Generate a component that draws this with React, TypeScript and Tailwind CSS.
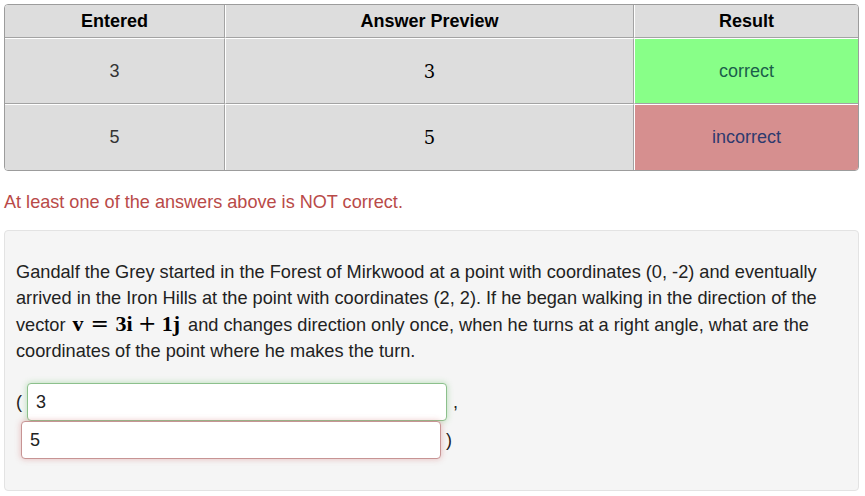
import React from "react";

const rows = [
  { entered: "3", preview: "3", ok: true },
  { entered: "5", preview: "5", ok: false },
];

export default function App() {
  return (
    <div className="min-h-screen bg-white pl-[4px] pt-[4px] font-['Liberation_Sans',Arial,sans-serif] text-[#333]">
      <div className="w-[855px]">
        <div className="overflow-hidden rounded-[4px] border border-[#9c9c9c]">
          <table className="w-full border-separate border-spacing-0 text-center text-[18px]">
            <colgroup>
              <col className="w-[220px]" />
              <col className="w-[409px]" />
              <col />
            </colgroup>
            <thead>
              <tr className="h-[33px] bg-[#dddddd]">
                <th className="border-b border-r border-[#a3a3a3] font-bold text-black">Entered</th>
                <th className="border-b border-l border-r border-b-[#a3a3a3] border-l-white border-r-[#a3a3a3] font-bold text-black">
                  Answer Preview
                </th>
                <th className="border-b border-l border-b-[#a3a3a3] border-l-white font-bold text-black">Result</th>
              </tr>
            </thead>
            <tbody>
              {rows.map((r, i) => (
                <tr key={i} className="h-[66px]">
                  <td
                    className={`border-r border-t border-r-[#a3a3a3] border-t-white bg-[#dddddd] ${i === 0 ? "border-b border-b-[#a3a3a3]" : ""}`}
                  >
                    {r.entered}
                  </td>
                  <td
                    className={`border-l border-r border-t border-l-white border-r-[#a3a3a3] border-t-white bg-[#dddddd] font-['DejaVu_Serif',serif] text-[18px] text-black ${i === 0 ? "border-b border-b-[#a3a3a3]" : ""}`}
                  >
                    {r.preview}
                  </td>
                  <td
                    className={`border-l border-t border-l-white border-t-white ${
                      r.ok ? "bg-[#88ff88] text-[#1b5e4a]" : "bg-[#d68f8f] text-[#2e3a6e]"
                    } ${i === 0 ? "border-b border-b-[#a3a3a3]" : ""}`}
                  >
                    {r.ok ? "correct" : "incorrect"}
                  </td>
                </tr>
              ))}
            </tbody>
          </table>
        </div>

        <p className="mt-[20px] text-[18.1px] leading-[22px] text-[#b94a48]">
          At least one of the answers above is NOT correct.
        </p>

        <div className="mt-[17px] rounded-[4px] border border-[#e3e3e3] bg-[#f5f5f5] px-[11px] pb-[31px] pt-[28px]">
          <p className="text-[18.2px] leading-[26px] text-[#222]">
            Gandalf the Grey started in the Forest of Mirkwood at a point with coordinates (0, -2) and eventually
            arrived in the Iron Hills at the point with coordinates (2, 2). If he began walking in the direction of the
            vector{" "}
            <span className="ml-[2px] mr-[3px] whitespace-nowrap font-['Liberation_Serif',serif] text-[22px] leading-[26px] text-black">
              <b>v</b>
              <span className="inline-block w-[32px] text-center font-['DejaVu_Serif',serif] text-[22px] font-light">=</span>
              <b>3i</b>
              <span className="inline-block w-[29px] text-center font-['DejaVu_Serif',serif] text-[22px] font-light">+</span>
              <b>1j</b>
            </span>{" "}
            and changes direction only once, when he turns at a right angle, what are the coordinates of the point
            where he makes the turn.
          </p>

          <div className="mt-[19px] flex flex-wrap items-center text-[18px] text-[#222]">
            <span>(</span>
            <div className="ml-[5px] flex h-[38px] w-[420px] items-center rounded-[4px] border border-[#8cc08c] bg-white pl-[8px] shadow-[0_0_6px_rgba(100,190,100,0.45)]">
              3
            </div>
            <span className="ml-[6px] mr-[6px]">,</span>
            <div className="ml-[5px] flex h-[38px] w-[420px] items-center rounded-[4px] border border-[#c79494] bg-white pl-[8px] shadow-[0_0_6px_rgba(210,110,110,0.45)]">
              5
            </div>
            <span className="ml-[5px]">)</span>
          </div>
        </div>
      </div>
    </div>
  );
}
